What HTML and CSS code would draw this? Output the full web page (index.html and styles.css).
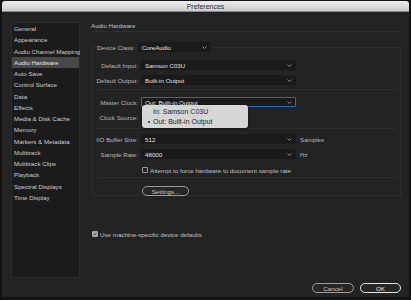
FILE: index.html
```html
<!DOCTYPE html>
<html lang="en">
<head>
    <meta charset="UTF-8">
    <title>Preferences</title>
    <link rel="stylesheet" href="styles.css">
</head>
<body>
    <div class="window">
        <div class="titlebar">Preferences</div>
        <div class="content">
            <ul class="sidebar">
                <li>General</li>
                <li>Appearance</li>
                <li>Audio Channel Mapping</li>
                <li class="selected">Audio Hardware</li>
                <li>Auto Save</li>
                <li>Control Surface</li>
                <li>Data</li>
                <li>Effects</li>
                <li>Media &amp; Disk Cache</li>
                <li>Memory</li>
                <li>Markers &amp; Metadata</li>
                <li>Multitrack</li>
                <li>Multitrack Clips</li>
                <li>Playback</li>
                <li>Spectral Displays</li>
                <li>Time Display</li>
            </ul>
            <div class="panel">
                <div class="panel-title">Audio Hardware</div>
                <fieldset class="group">
                    <legend class="legend">
                        <span class="legend-label">Device Class:</span>
                        <span class="select small"><span>CoreAudio</span><svg class="chev" width="5" height="3" viewBox="0 0 5 3"><path d="M0.5 0.5 L2.5 2.5 L4.5 0.5" fill="none" stroke="#9a9a9a" stroke-width="0.9"/></svg></span>
                    </legend>
                    <div class="row first">
                        <span class="label">Default Input:</span>
                        <span class="select"><span>Samson C03U</span><svg class="chev" width="5" height="3" viewBox="0 0 5 3"><path d="M0.5 0.5 L2.5 2.5 L4.5 0.5" fill="none" stroke="#9a9a9a" stroke-width="0.9"/></svg></span>
                    </div>
                    <div class="row">
                        <span class="label">Default Output:</span>
                        <span class="select"><span>Built-in Output</span><svg class="chev" width="5" height="3" viewBox="0 0 5 3"><path d="M0.5 0.5 L2.5 2.5 L4.5 0.5" fill="none" stroke="#9a9a9a" stroke-width="0.9"/></svg></span>
                    </div>
                    <div class="sep sep-a"></div>
                    <div class="row clock">
                        <span class="label">Master Clock:</span>
                        <span class="select focus"><span>Out: Built-in Output</span><svg class="chev" width="5" height="3" viewBox="0 0 5 3"><path d="M0.5 0.5 L2.5 2.5 L4.5 0.5" fill="none" stroke="#9a9a9a" stroke-width="0.9"/></svg></span>
                        <div class="menu">
                            <div class="menu-item">In: Samson C03U</div>
                            <div class="menu-item checked">Out: Built-in Output</div>
                        </div>
                    </div>
                    <div class="row">
                        <span class="label">Clock Source:</span>
                    </div>
                    <div class="sep sep-b"></div>
                    <div class="row buffer">
                        <span class="label">I/O Buffer Size:</span>
                        <span class="select"><span>512</span><svg class="chev" width="5" height="3" viewBox="0 0 5 3"><path d="M0.5 0.5 L2.5 2.5 L4.5 0.5" fill="none" stroke="#9a9a9a" stroke-width="0.9"/></svg></span>
                        <span class="unit">Samples</span>
                    </div>
                    <div class="row">
                        <span class="label">Sample Rate:</span>
                        <span class="select"><span>48000</span><svg class="chev" width="5" height="3" viewBox="0 0 5 3"><path d="M0.5 0.5 L2.5 2.5 L4.5 0.5" fill="none" stroke="#9a9a9a" stroke-width="0.9"/></svg></span>
                        <span class="unit">Hz</span>
                    </div>
                    <div class="row check-row">
                        <span class="box"></span>
                        <span class="check-text">Attempt to force hardware to document sample rate</span>
                    </div>
                    <div class="sep sep-c"></div>
                    <div class="row settings-row">
                        <span class="pill settings">Settings...</span>
                    </div>
                </fieldset>
                <div class="defaults">
                    <span class="box on"><svg width="6" height="6" viewBox="0 0 6 6"><path d="M1 3.2 L2.4 4.6 L5 1.2" fill="none" stroke="#1e1e1e" stroke-width="1.1"/></svg></span>
                    <span class="check-text">Use machine-specific device defaults</span>
                </div>
                <div class="actions">
                    <span class="pill">Cancel</span>
                    <span class="pill default">OK</span>
                </div>
            </div>
        </div>
    </div>
</body>
</html>
```

FILE: styles.css
```css
html, body {
    margin: 0;
    background: #121212;
}
body {
    padding: 1px 2px 0 2px;
    font-family: "Liberation Sans", Arial, sans-serif;
    font-size: 6.2px;
    color: #b9b9b9;
}
.window {
    width: 407px;
    height: 296px;
    background: #232323;
    border-radius: 3px 3px 0 0;
    overflow: hidden;
}
.titlebar {
    height: 11px;
    line-height: 11px;
    text-align: center;
    font-size: 7px;
    color: #2e2e2e;
    background: linear-gradient(#ececec, #cdcdcd);
    border-bottom: 1px solid #8a8a8a;
    box-sizing: border-box;
}
.content {
    display: flex;
    padding: 10px 0 0 9px;
}
.sidebar {
    list-style: none;
    margin: 0;
    padding: 0;
    width: 69px;
    height: 256px;
    background: #1b1b1b;
    border: 1px solid #2b2b2b;
    box-sizing: border-box;
}
.sidebar li {
    height: 11.25px;
    line-height: 11.25px;
    padding-left: 2px;
    color: #cfcfcf;
    white-space: nowrap;
}
.sidebar li.selected {
    background: #484848;
    color: #e6e6e6;
}
.panel {
    margin-left: 11px;
    width: 311px;
    display: flex;
    flex-direction: column;
}
.panel-title {
    height: 9px;
    line-height: 7px;
    padding-left: 0;
    color: #c4c4c4;
    border-bottom: 1px solid #2e2e2e;
}
.group {
    margin: 10px 0 0 1px;
    padding: 0 0 0 0;
    width: 309px;
    height: 154px;
    box-sizing: border-box;
    border: 1px solid #2e2e2e;
    display: flex;
    flex-direction: column;
}
.legend {
    display: flex;
    align-items: center;
    margin-left: 4px;
    padding: 0 1px 0 0;
}
.legend-label {
    margin-right: 3px;
}
.row {
    display: flex;
    align-items: center;
    height: 10px;
    margin-top: 5px;
    position: relative;
}
.row.first {
    margin-top: 8px;
}
.label {
    width: 45px;
    text-align: right;
    white-space: nowrap;
    margin-right: 3px;
}
.select {
    display: flex;
    align-items: center;
    justify-content: space-between;
    width: 155px;
    height: 10px;
    box-sizing: border-box;
    padding: 0 3px 0 3px;
    background: #1a1a1a;
    color: #e4e4e4;
    border: 1px solid #1a1a1a;
    border-radius: 1px;
}
.select.small {
    width: 73px;
}
.select.focus {
    border-color: #2d6bb0;
}
.unit {
    margin-left: 4px;
}
.sep {
    height: 1px;
    background: #2e2e2e;
    margin: 0 4px 0 4px;
}
.sep-a {
    margin-top: 4px;
}
.row.clock {
    margin-top: 7px;
}
.sep-b {
    margin-top: 6px;
}
.row.buffer {
    margin-top: 5px;
}
.row.check-row {
    margin-top: 6px;
    padding-left: 49px;
}
.box {
    width: 6px;
    height: 6px;
    box-sizing: border-box;
    border: 1px solid #9a9a9a;
    border-radius: 1px;
    margin-right: 2px;
    display: flex;
    align-items: center;
    justify-content: center;
}
.box.on {
    background: #a8a8a8;
    border-color: #a8a8a8;
}
.check-text {
    color: #c2c2c2;
}
.sep-c {
    margin-top: 2px;
}
.row.settings-row {
    margin-top: 8px;
    padding-left: 49px;
}
.pill {
    display: flex;
    align-items: center;
    justify-content: center;
    height: 10px;
    box-sizing: border-box;
    border: 1px solid #9b9b9b;
    border-radius: 5px;
    color: #c8c8c8;
    background: #262626;
}
.settings {
    width: 47px;
}
.menu {
    position: absolute;
    left: 49px;
    top: 8px;
    width: 106px;
    height: 23px;
    box-sizing: border-box;
    padding: 2px 0 0 0;
    background: #d6d6d6;
    border-radius: 3px;
    box-shadow: 0 1px 3px rgba(0, 0, 0, 0.6);
    z-index: 2;
}
.menu-item {
    height: 9.5px;
    line-height: 9.5px;
    padding-left: 11px;
    font-size: 7px;
    color: #1f1f1f;
    position: relative;
}
.menu-item.checked::before {
    content: '';
    position: absolute;
    left: 6px;
    top: 4px;
    width: 2px;
    height: 2px;
    border-radius: 1px;
    background: #1f1f1f;
}
.defaults {
    display: flex;
    align-items: center;
    margin: 34px 0 0 1px;
    height: 8px;
}
.actions {
    display: flex;
    justify-content: flex-end;
    gap: 6px;
    margin-top: 45px;
    padding-right: 1px;
}
.actions .pill {
    width: 42px;
}
.actions .pill.default {
    border-color: #e8e8e8;
    color: #f0f0f0;
    width: 41px;
}
```
